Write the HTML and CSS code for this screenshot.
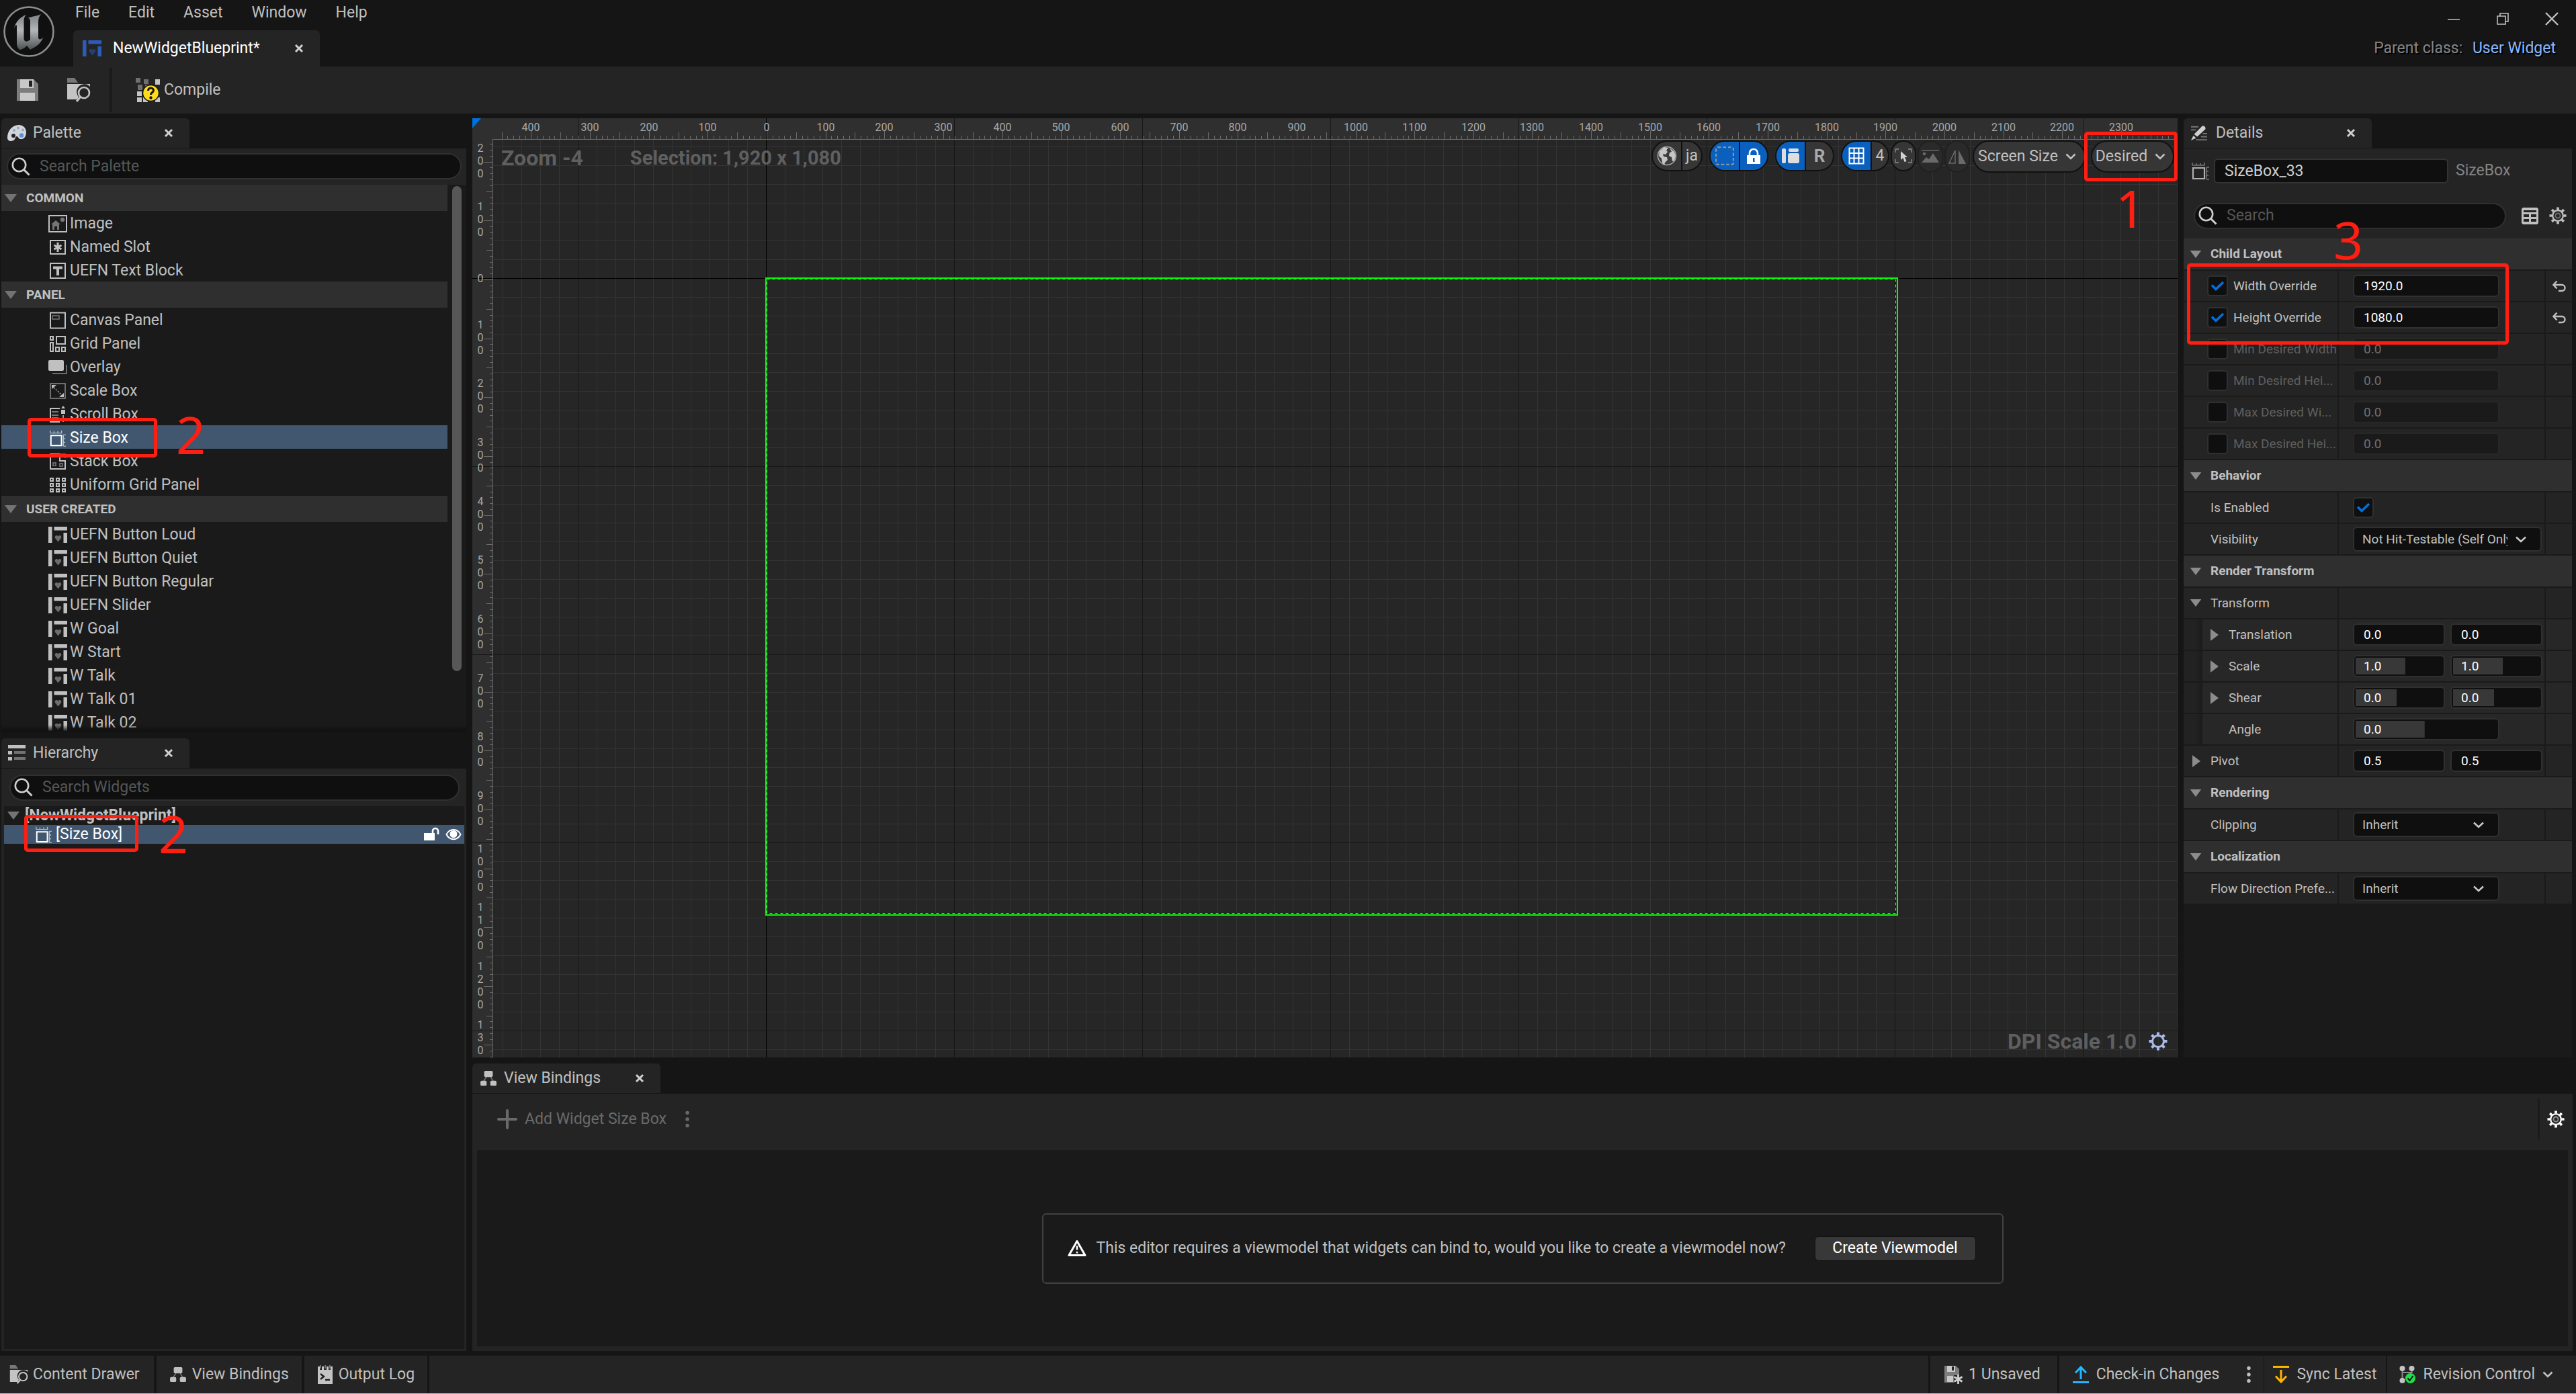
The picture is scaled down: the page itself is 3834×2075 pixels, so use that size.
FILE: index.html
```html
<!DOCTYPE html>
<html lang="en">
<head>
<meta charset="utf-8">
<meta name="viewport" content="width=device-width, initial-scale=1">
<title>NewWidgetBlueprint</title>
<link rel="stylesheet" href="styles.css">
</head>
<body>
<svg class="defs" aria-hidden="true">
  <defs>
    <linearGradient id="metal" x1="0" y1="0" x2="0" y2="1"><stop offset="0" stop-color="#7b7f80"/><stop offset=".45" stop-color="#b4b7b8"/><stop offset="1" stop-color="#4c5152"/></linearGradient>
    <symbol id="i-x" viewBox="0 0 14 14"><path d="M2 2l10 10M12 2L2 12" stroke="currentColor" stroke-width="3" fill="none"/></symbol>
    <symbol id="i-widget" viewBox="0 0 28 24"><path fill="currentColor" d="M0 0h5.500v24H0zM8.500 0H28v5.500H8.500zM22.500 9H28v15h-5.500z"/><path fill="currentColor" opacity=".5" d="M14.500 22.500l-4.500-5.500c-1-2 .5-4 2.200-4 1 0 1.800.6 2.300 1.500.5-.9 1.300-1.500 2.300-1.500 1.700 0 3.200 2 2.200 4z"/></symbol>
    <symbol id="i-save" viewBox="0 0 32 32"><path fill="#7d7d7d" d="M0 0h25l7 7v25H0z"/><path fill="#c8c8c8" d="M5 0h20v13H5zM5 20h22v12H5z"/><path fill="#222" d="M18 2h5v9h-5z"/></symbol>
    <symbol id="i-browse" viewBox="0 0 36 36"><path fill="#777" d="M1 0h11l5 7H1z"/><path fill="#c4c4c4" d="M1 9h34v4a11 11 0 0 0-17 15l-2 4H1z"/><circle cx="26" cy="22" r="8" fill="none" stroke="#c4c4c4" stroke-width="2.600"/><path d="M21 28l-6 7" stroke="#c4c4c4" stroke-width="3"/></symbol>
    <symbol id="i-compile" viewBox="0 0 36 36"><path fill="#6f6f6f" d="M0 0h7v7H0zM12 2h7v7h-7zM3 10h7v8H3zM14 10h7v4h-7z"/><path fill="#c4c4c4" d="M29 2h7v8h-7zM2 20h7v7H2zM2 29h7v7H2zM11 29h7v7h-7zM29 29h7v7h-7z"/><circle cx="22.500" cy="22.500" r="12" fill="#ffdc1c" stroke="#151515" stroke-width="1.500"/><path d="M18.500 19c0-5.500 8-5 8-.5 0 3-4 3-4 6.500" fill="none" stroke="#151515" stroke-width="3"/><circle cx="22.500" cy="29.500" r="2.200" fill="#151515"/></symbol>
    <symbol id="i-palette" viewBox="0 0 28 24"><path fill="#d2d6da" d="M17 0c7 0 11 5 11 11 0 7-4 11-9 10-3-.6-2.500-4-5-4s-1.500 4-5 6c-4 2-9 1-9-4C0 9 7 0 17 0z"/><circle cx="9" cy="16" r="3" fill="#242424"/><circle cx="21" cy="15.500" r="3.200" fill="#5f8fcf"/><circle cx="10" cy="8" r="2" fill="#8aa9cf"/><circle cx="16" cy="4.500" r="2" fill="#8aa9cf"/><circle cx="23" cy="7.500" r="2" fill="#8aa9cf"/></symbol>
    <symbol id="i-search" viewBox="0 0 28 28"><circle cx="11.500" cy="11.500" r="9.700" fill="none" stroke="currentColor" stroke-width="2.600"/><path d="M18.500 18.500l8 8" stroke="currentColor" stroke-width="3"/></symbol>
    <symbol id="i-image" viewBox="0 0 28 26"><path d="M1 1h26v24H1z" fill="none" stroke="currentColor" stroke-width="2"/><g fill="currentColor" opacity=".55"><path d="M4 14l7-6 7 6h-2v8h-3v-5H9v5H6v-8z"/><circle cx="21" cy="7" r="3.200"/></g></symbol>
    <symbol id="i-slot" viewBox="0 0 28 26"><path d="M3 3h22v20H3z" fill="none" stroke="currentColor" stroke-width="2"/><path d="M14 6v14M8.500 10l11 6M19.500 10l-11 6" stroke="currentColor" stroke-width="3"/></symbol>
    <symbol id="i-text" viewBox="0 0 28 26"><path d="M3 2h22v22H3z" fill="none" stroke="currentColor" stroke-width="2"/><path d="M7 8.500h14M14 8v12" stroke="currentColor" stroke-width="4"/></symbol>
    <symbol id="i-canvas" viewBox="0 0 28 26"><path d="M3 1.500h22v23H3z" fill="none" stroke="currentColor" stroke-width="2"/><path d="M6 6h10v5H6z" fill="none" stroke="currentColor" stroke-width="1.500" opacity=".55"/></symbol>
    <symbol id="i-grid" viewBox="0 0 28 26"><path d="M3 2h4v5H3zM3 11h4v13H3zM12 2h13v11H12zM11 18h5v6h-5zM20 18h5v6h-5z" fill="none" stroke="currentColor" stroke-width="2"/></symbol>
    <symbol id="i-overlay" viewBox="0 0 28 26"><rect x="0" y="2" width="23" height="16" rx="2" fill="currentColor"/><path d="M27 9v13H6" fill="none" stroke="currentColor" stroke-width="2" opacity=".5"/></symbol>
    <symbol id="i-scale" viewBox="0 0 28 26"><path d="M3 2h22v22H3z" fill="none" stroke="currentColor" stroke-width="2" opacity=".5"/><path fill="currentColor" d="M5 4h7l-7 6zM23 22h-7l7-6z"/><path d="M8 8l12 11" stroke="currentColor" stroke-width="1.500" stroke-dasharray="2 2"/></symbol>
    <symbol id="i-scroll" viewBox="0 0 28 26"><path d="M17 4H3v20h14" fill="none" stroke="currentColor" stroke-width="2"/><path d="M5 9h10M5 14h10M5 18h10" stroke="currentColor" stroke-width="2" opacity=".55"/><path fill="currentColor" d="M19 6h6v6h-6zM22 0l3 4h-6z"/><path d="M22 14v10" stroke="currentColor" stroke-width="1.500"/></symbol>
    <symbol id="i-size" viewBox="0 0 28 28"><path d="M3 10h17v16H3z" fill="none" stroke="currentColor" stroke-width="2.200"/><path d="M2 6V2M2 6h18V2M8 6V3M14 6V3M23 9v18M23 9h4M23 27h4M23 15h3M23 21h3" fill="none" stroke="currentColor" stroke-width="1.500" opacity=".6"/></symbol>
    <symbol id="i-stack" viewBox="0 0 28 26"><path d="M14 2H3v22h22V12h-8V2z" fill="none" stroke="currentColor" stroke-width="2"/><path d="M7 6h3M7 15h4v4H7zM17 16h4v4h-4zM19 2h6v6" fill="none" stroke="currentColor" stroke-width="1.500" opacity=".6"/></symbol>
    <symbol id="i-uniform" viewBox="0 0 28 26"><path d="M3 3h4v4H3zM12 3h4v4h-4zM21 3h4v4h-4zM3 11h4v4H3zM12 11h4v4h-4zM21 11h4v4h-4zM3 19h4v4H3zM12 19h4v4h-4zM21 19h4v4h-4z" fill="none" stroke="currentColor" stroke-width="2"/></symbol>
    <symbol id="i-down" viewBox="0 0 18 12"><path d="M0 0h18l-9 12z" fill="currentColor"/></symbol>
    <symbol id="i-right" viewBox="0 0 12 18"><path d="M0 0l12 9-12 9z" fill="currentColor"/></symbol>
    <symbol id="i-tree" viewBox="0 0 26 24"><path fill="currentColor" d="M0 0h26v5H0zM0 9h6v5H0zM0 18h6v5H0z"/><path fill="currentColor" opacity=".5" d="M9 9h17v4H9zM9 18h17v4H9z"/></symbol>
    <symbol id="i-unlock" viewBox="0 0 24 20"><path fill="currentColor" d="M0 8h16v11H0z"/><path d="M13 8V5a4 4 0 0 1 8 0v5" fill="none" stroke="currentColor" stroke-width="2.600"/></symbol>
    <symbol id="i-eye" viewBox="0 0 24 18"><path d="M1.500 9C6-.5 18-.5 22.500 9 18 18.500 6 18.500 1.500 9z" fill="none" stroke="currentColor" stroke-width="2"/><circle cx="12" cy="8.500" r="5.500" fill="currentColor"/></symbol>
    <symbol id="i-globe" viewBox="0 0 30 32"><circle cx="15" cy="16" r="13.500" fill="#3c3c3c" stroke="#a9a9a9" stroke-width="1.500"/><path fill="#c6c6c6" d="M4 9l7-6 6 1-3 4 2 2-3 4-4-1 1 4 5 1 1 4-4 4-1 4-3-4-1-6-4-4zM19 4l7 6 2 6-2 7-3 1-1-6-4-2 1-5 3-1z"/></symbol>
    <symbol id="i-marquee" viewBox="0 0 28 28"><rect x="1" y="1" width="26" height="26" rx="3" fill="none" stroke="#8d9499" stroke-width="2.400" stroke-dasharray="4.500 3"/></symbol>
    <symbol id="i-lock" viewBox="0 0 20 23"><path fill="#fff" d="M0 10h20v13H0z"/><path d="M4 11V7a6 6 0 0 1 12 0v4" fill="none" stroke="#fff" stroke-width="2.600"/><path fill="#0a60bf" d="M9 14h2.500v6H9z"/></symbol>
    <symbol id="i-layout" viewBox="0 0 26 22"><g fill="#dedede"><rect width="6" height="22" rx="2"/><rect x="10" width="15" height="5" rx="2"/><rect x="9" y="7" width="17" height="15" rx="3"/></g></symbol>
    <symbol id="i-cells" viewBox="0 0 24 26"><path d="M1.500 1.500h21v23h-21zM8.500 1.500v23M15.500 1.500v23M1.500 9h21M1.500 16.500h21" fill="none" stroke="#fff" stroke-width="2"/></symbol>
    <symbol id="i-pick" viewBox="0 0 26 22"><path d="M1 6V1h5M20 1h5v5M25 16v5h-5M6 21H1v-5" fill="none" stroke="#777" stroke-width="1.800"/><path fill="#d0d0d0" d="M9 4l10 9h-4l2.500 6-3 1-2-6L9 17z"/></symbol>
    <symbol id="i-picture" viewBox="0 0 26 20"><path d="M0 1h26" stroke="#6a6a6a" stroke-width="1.500"/><path fill="#6a6a6a" d="M0 19l7-8 4 3 6-9 9 14z"/><circle cx="4" cy="6" r="2.300" fill="#6a6a6a"/></symbol>
    <symbol id="i-mirror" viewBox="0 0 26 22"><path d="M10 2v19H1z" fill="none" stroke="#6a6a6a" stroke-width="1.500"/><path d="M15 1l11 21H15z" fill="#6a6a6a"/></symbol>
    <symbol id="i-chev" viewBox="0 0 16 10"><path d="M1.500 1.500L8 8l6.500-6.500" fill="none" stroke="currentColor" stroke-width="2.600"/></symbol>
    <symbol id="i-gear" viewBox="0 0 28 28"><circle cx="14" cy="14" r="8.500" fill="none" stroke="currentColor" stroke-width="2.600"/><g stroke="currentColor" stroke-width="4"><path d="M14 .5v4M14 23.500v4M.5 14h4M23.500 14h4M4.500 4.500l2.800 2.800M20.700 20.700l2.800 2.800M23.500 4.500l-2.800 2.800M7.300 20.700l-2.800 2.800"/></g><circle cx="14" cy="14" r="3.800" fill="none" stroke="currentColor" stroke-width="2" opacity=".5"/></symbol>
    <symbol id="i-gear-plain" viewBox="0 0 28 28"><circle cx="14" cy="14" r="8.500" fill="none" stroke="currentColor" stroke-width="3"/><g stroke="currentColor" stroke-width="4"><path d="M14 .5v5M14 22.500v5M.5 14h5M22.500 14h5M4.500 4.500l3 3M20.500 20.500l3 3M23.500 4.500l-3 3M7.500 20.500l-3 3"/></g></symbol>
    <symbol id="i-pencil" viewBox="0 0 27 26"><path d="M1 3h12M1 8h8M20 14h7M17 19h10M9 24h18" stroke="#777" stroke-width="2"/><path fill="#d0d0d0" d="M19 2c2-2 7 2 5 5L11 19l-5-4zM5 17l4 4-8 4z"/></symbol>
    <symbol id="i-table" viewBox="0 0 25 25"><path fill="currentColor" fill-rule="evenodd" d="M2 0h21l2 2v21l-2 2H2l-2-2V2zM3 4v3h19V4zM3 10v4h8v-4zM14 10v4h8v-4zM3 17v4h8v-4zM14 17v4h8v-4z"/></symbol>
    <symbol id="i-reset" viewBox="0 0 20 18"><path d="M1 7h13a4.500 4.500 0 0 1 0 9H9M6.500 1.500L1.500 7l5 5.500" fill="none" stroke="currentColor" stroke-width="2.400"/></symbol>
    <symbol id="i-bind" viewBox="0 0 26 24"><g fill="currentColor"><rect x="6" width="14" height="10" rx="2"/><rect y="16" width="10" height="8" rx="2"/><rect x="16" y="16" width="10" height="8" rx="2"/></g><path d="M10 9l-5 8M16 9l5 8" stroke="currentColor" stroke-width="1.500" opacity=".6"/></symbol>
    <symbol id="i-plus" viewBox="0 0 30 30"><path d="M15 2v26M2 15h26" stroke="currentColor" stroke-width="4" stroke-linecap="round"/></symbol>
    <symbol id="i-dots" viewBox="0 0 6 26"><g fill="currentColor"><circle cx="3" cy="3.500" r="2.700"/><circle cx="3" cy="13" r="2.700"/><circle cx="3" cy="22.500" r="2.700"/></g></symbol>
    <symbol id="i-warn" viewBox="0 0 28 26"><path d="M14 2.500L26 23.500H2z" fill="none" stroke="#fff" stroke-width="3" stroke-linejoin="round"/><path d="M14 9.500v6M14 18v2.500" stroke="#fff" stroke-width="2.600"/></symbol>
    <symbol id="i-log" viewBox="0 0 22 28"><path fill="#c4c4c4" d="M0 2h3v5h3V2h3v5h4V2h3v5h3V2h3v26H0z"/><path d="M4 0v5M11 0v5M18 0v5" stroke="#8a8a8a" stroke-width="1.500"/><path d="M4 13l5 4-5 4M11 22h7" fill="none" stroke="#222" stroke-width="2.400"/></symbol>
    <symbol id="i-unsaved" viewBox="0 0 28 28"><path fill="#7d7d7d" d="M0 1h17l5 5v9h-8v11H0z"/><path fill="#c8c8c8" d="M4 1h12v9H4zM4 16h9v9H4z"/><path fill="#222" d="M11 2h3v6h-3z"/><path d="M20.500 14v14M14.500 17.500l12 7M26.500 17.500l-12 7" stroke="#d0d0d0" stroke-width="2.800"/></symbol>
    <symbol id="i-up" viewBox="0 0 24 26"><path d="M12 20V3M4 10.500l8-8.500 8 8.500M0 24.500h24" fill="none" stroke="#26b4fc" stroke-width="3"/></symbol>
    <symbol id="i-sync" viewBox="0 0 24 26"><path d="M12 6v17M4 15.500l8 8.500 8-8.500M0 1.500h24" fill="none" stroke="#ffb400" stroke-width="3"/></symbol>
    <symbol id="i-rev" viewBox="0 0 24 26"><path d="M4.500 4v18M18.500 4v6H5" fill="none" stroke="#8a8a8a" stroke-width="2"/><g fill="#c4c4c4"><circle cx="4.500" cy="4" r="4"/><circle cx="18.500" cy="4" r="4"/><circle cx="4.500" cy="22" r="4"/></g><circle cx="16.500" cy="18.500" r="7.500" fill="#1fe04b"/><path d="M12.500 18.500l3 3.500 5-7" fill="none" stroke="#111" stroke-width="2"/></symbol>
  </defs>
</svg>

<header class="titlebar">
  <svg class="logo" viewBox="0 0 78 78" aria-hidden="true"><circle cx="39" cy="39" r="36.500" fill="#101010" stroke="#8b8f90" stroke-width="2.600"/><path fill="url(#metal)" d="M17 34c2-9 9-17 18-20-3 3-3.500 6-3.500 10v25c0 4 3 6 6.500 4l3-2V25c0-5-1-6-4-6 8-3 14-3 20-6-3 4-4 7-4 12v22c0 4 2 5 7 1-3 8-9 13-19 18l-5-6c-4 4-8 6-11 6-3-3-4-6-4-10V33c0-5-1-6-4 1z"/></svg>
  <div class="title-main">
    <nav class="menu"><button>File</button><button>Edit</button><button>Asset</button><button>Window</button><button>Help</button></nav>
    <div class="doc-tab"><svg class="ic doc-icon"><use href="#i-widget"/></svg><span>NewWidgetBlueprint*</span><button class="close" aria-label="Close tab"><svg><use href="#i-x"/></svg></button></div>
  </div>
  <div class="title-side">
    <div class="window-buttons">
      <button aria-label="Minimize"><svg viewBox="0 0 20 20"><path d="M1 11h18" stroke="currentColor" stroke-width="1.500"/></svg></button>
      <button aria-label="Restore"><svg viewBox="0 0 20 20"><path d="M2 6h12v12H2zM6 6V2h12v12h-4" fill="none" stroke="currentColor" stroke-width="1.600"/></svg></button>
      <button aria-label="Close"><svg viewBox="0 0 20 20"><path d="M1 1l18 18M19 1L1 19" stroke="currentColor" stroke-width="2.400"/></svg></button>
    </div>
    <p class="parent">Parent class: <a href="#">User Widget</a></p>
  </div>
</header>

<div class="toolbar">
  <button aria-label="Save"><svg class="tool-save"><use href="#i-save"/></svg></button>
  <button aria-label="Browse"><svg class="tool-icon"><use href="#i-browse"/></svg></button>
  <span class="tool-sep"></span>
  <button class="compile"><svg class="tool-icon"><use href="#i-compile"/></svg>Compile</button>
</div>

<main class="workspace">
  <aside class="left">
    <section class="dock">
      <div class="tab"><svg class="ic"><use href="#i-palette"/></svg><h2>Palette</h2><button class="close" aria-label="Close Palette"><svg><use href="#i-x"/></svg></button></div>
      <div class="panel palette">
        <label class="search"><svg><use href="#i-search"/></svg><input type="text" placeholder="Search Palette" aria-label="Search Palette"></label>
        <div class="palette-body">
          <div class="palette-list">
            <h3><svg><use href="#i-down"/></svg>COMMON</h3>
            <ul>
              <li><svg class="ic"><use href="#i-image"/></svg>Image</li>
              <li><svg class="ic"><use href="#i-slot"/></svg>Named Slot</li>
              <li><svg class="ic"><use href="#i-text"/></svg>UEFN Text Block</li>
            </ul>
            <h3><svg><use href="#i-down"/></svg>PANEL</h3>
            <ul>
              <li><svg class="ic"><use href="#i-canvas"/></svg>Canvas Panel</li>
              <li><svg class="ic"><use href="#i-grid"/></svg>Grid Panel</li>
              <li><svg class="ic"><use href="#i-overlay"/></svg>Overlay</li>
              <li><svg class="ic"><use href="#i-scale"/></svg>Scale Box</li>
              <li><svg class="ic"><use href="#i-scroll"/></svg>Scroll Box</li>
              <li class="selected"><svg class="ic"><use href="#i-size"/></svg>Size Box</li>
              <li><svg class="ic"><use href="#i-stack"/></svg>Stack Box</li>
              <li><svg class="ic"><use href="#i-uniform"/></svg>Uniform Grid Panel</li>
            </ul>
            <h3><svg><use href="#i-down"/></svg>USER CREATED</h3>
            <ul>
              <li><svg class="ic"><use href="#i-widget"/></svg>UEFN Button Loud</li>
              <li><svg class="ic"><use href="#i-widget"/></svg>UEFN Button Quiet</li>
              <li><svg class="ic"><use href="#i-widget"/></svg>UEFN Button Regular</li>
              <li><svg class="ic"><use href="#i-widget"/></svg>UEFN Slider</li>
              <li><svg class="ic"><use href="#i-widget"/></svg>W Goal</li>
              <li><svg class="ic"><use href="#i-widget"/></svg>W Start</li>
              <li><svg class="ic"><use href="#i-widget"/></svg>W Talk</li>
              <li><svg class="ic"><use href="#i-widget"/></svg>W Talk 01</li>
              <li><svg class="ic"><use href="#i-widget"/></svg>W Talk 02</li>
            </ul>
          </div>
          <div class="scroll"><span></span></div>
        </div>
      </div>
    </section>
    <section class="dock">
      <div class="tab"><svg class="ic"><use href="#i-tree"/></svg><h2>Hierarchy</h2><button class="close" aria-label="Close Hierarchy"><svg><use href="#i-x"/></svg></button></div>
      <div class="panel hierarchy">
        <label class="search"><svg><use href="#i-search"/></svg><input type="text" placeholder="Search Widgets" aria-label="Search Widgets"></label>
        <ul class="hierarchy-list">
          <li class="root"><svg class="arrow"><use href="#i-down"/></svg>[NewWidgetBlueprint]</li>
          <li class="child selected"><svg class="ic"><use href="#i-size"/></svg><span>[Size Box]</span><button aria-label="Lock"><svg class="row-lock"><use href="#i-unlock"/></svg></button><button aria-label="Visibility"><svg class="row-eye"><use href="#i-eye"/></svg></button></li>
        </ul>
      </div>
    </section>
    <div class="mark mark-palette"></div><span class="num num-palette">2</span>
    <div class="mark mark-hierarchy"></div><span class="num num-hierarchy">2</span>
  </aside>

  <section class="viewport" id="viewport">
    <svg class="stage" id="stage" aria-label="Designer canvas"></svg>
    <div class="view-bar">
      <strong class="zoom">Zoom -4</strong><strong class="selection">Selection: 1,920 x 1,080</strong>
      <div class="tools">
        <div class="pill lang"><button aria-label="Localization"><svg width="30" height="32"><use href="#i-globe"/></svg></button><button>ja</button></div>
        <div class="pill"><button class="on" aria-label="Outlines"><svg width="28" height="28"><use href="#i-marquee"/></svg></button><button class="on" aria-label="Respect locks"><svg width="20" height="23"><use href="#i-lock"/></svg></button></div>
        <div class="pill"><button class="on" aria-label="Layout"><svg width="26" height="22"><use href="#i-layout"/></svg></button><button class="bold">R</button></div>
        <div class="cluster">
          <div class="pill snap"><button class="on" aria-label="Grid snap"><svg width="24" height="26"><use href="#i-cells"/></svg></button><button>4</button></div>
          <button class="round" aria-label="Pick"><svg width="26" height="22"><use href="#i-pick"/></svg></button>
          <button class="round off" aria-label="Background"><svg width="26" height="20"><use href="#i-picture"/></svg></button>
          <button class="round off" aria-label="Flip"><svg width="26" height="22"><use href="#i-mirror"/></svg></button>
        </div>
        <div class="drops">
          <button class="drop screen">Screen Size<svg><use href="#i-chev"/></svg></button>
          <button class="drop desired">Desired<svg><use href="#i-chev"/></svg></button>
        </div>
      </div>
    </div>
    <div class="dpi"><strong>DPI Scale 1.0</strong><button aria-label="DPI settings"><svg><use href="#i-gear-plain"/></svg></button></div>
    <div class="mark mark-desired"></div><span class="num num-desired">1</span>
  </section>

  <section class="dock details">
    <div class="tab"><svg class="ic"><use href="#i-pencil"/></svg><h2>Details</h2><button class="close" aria-label="Close Details"><svg><use href="#i-x"/></svg></button></div>
    <div class="panel">
      <div class="name-row"><svg class="ic"><use href="#i-size"/></svg><input type="text" value="SizeBox_33" aria-label="Widget name"><span>SizeBox</span></div>
      <div class="find-row">
        <label class="search"><svg><use href="#i-search"/></svg><input type="text" placeholder="Search" aria-label="Search details"></label>
        <button aria-label="Property matrix"><svg width="25" height="25"><use href="#i-table"/></svg></button>
        <button aria-label="View options"><svg width="26" height="26"><use href="#i-gear"/></svg></button>
      </div>
      <div class="props">
        <h3><svg><use href="#i-down"/></svg>Child Layout</h3>
        <div class="prop"><div class="key chk"><input type="checkbox" id="c1" checked><label for="c1">Width Override</label></div><div class="val"><input type="text" value="1920.0" aria-label="Width Override"></div><div class="rst"><button aria-label="Reset"><svg><use href="#i-reset"/></svg></button></div></div>
        <div class="prop"><div class="key chk"><input type="checkbox" id="c2" checked><label for="c2">Height Override</label></div><div class="val"><input type="text" value="1080.0" aria-label="Height Override"></div><div class="rst"><button aria-label="Reset"><svg><use href="#i-reset"/></svg></button></div></div>
        <div class="prop dim"><div class="key chk"><input type="checkbox" id="c3"><label for="c3">Min Desired Width</label></div><div class="val"><input type="text" value="0.0" disabled aria-label="Min Desired Width"></div><div class="rst"></div></div>
        <div class="prop dim"><div class="key chk"><input type="checkbox" id="c4"><label for="c4">Min Desired Hei...</label></div><div class="val"><input type="text" value="0.0" disabled aria-label="Min Desired Height"></div><div class="rst"></div></div>
        <div class="prop dim"><div class="key chk"><input type="checkbox" id="c5"><label for="c5">Max Desired Wi...</label></div><div class="val"><input type="text" value="0.0" disabled aria-label="Max Desired Width"></div><div class="rst"></div></div>
        <div class="prop dim"><div class="key chk"><input type="checkbox" id="c6"><label for="c6">Max Desired Hei...</label></div><div class="val"><input type="text" value="0.0" disabled aria-label="Max Desired Height"></div><div class="rst"></div></div>
        <h3><svg><use href="#i-down"/></svg>Behavior</h3>
        <div class="prop"><div class="key"><label for="enabled">Is Enabled</label></div><div class="val"><input type="checkbox" id="enabled" checked></div><div class="rst"></div></div>
        <div class="prop"><div class="key"><label for="vis">Visibility</label></div><div class="val"><select id="vis" class="wide"><option>Not Hit-Testable (Self Only)</option></select></div><div class="rst"></div></div>
        <h3><svg><use href="#i-down"/></svg>Render Transform</h3>
        <div class="prop"><div class="key"><svg class="fold"><use href="#i-down"/></svg>Transform</div><div class="val"></div><div class="rst"></div></div>
        <div class="prop sub"><div class="key"><svg class="fold side"><use href="#i-right"/></svg>Translation</div><div class="val two"><input type="text" value="0.0" aria-label="Translation X"><input type="text" value="0.0" aria-label="Translation Y"></div><div class="rst"></div></div>
        <div class="prop sub"><div class="key"><svg class="fold side"><use href="#i-right"/></svg>Scale</div><div class="val two"><input type="text" class="fill" style="--fill:56%" value="1.0" aria-label="Scale X"><input type="text" class="fill" style="--fill:56%" value="1.0" aria-label="Scale Y"></div><div class="rst"></div></div>
        <div class="prop sub"><div class="key"><svg class="fold side"><use href="#i-right"/></svg>Shear</div><div class="val two"><input type="text" class="fill" style="--fill:46%" value="0.0" aria-label="Shear X"><input type="text" class="fill" style="--fill:46%" value="0.0" aria-label="Shear Y"></div><div class="rst"></div></div>
        <div class="prop sub"><div class="key"><label for="angle">Angle</label></div><div class="val"><input type="text" id="angle" class="fill" style="--fill:48%" value="0.0"></div><div class="rst"></div></div>
        <div class="prop"><div class="key"><svg class="fold side"><use href="#i-right"/></svg>Pivot</div><div class="val two"><input type="text" value="0.5" aria-label="Pivot X"><input type="text" value="0.5" aria-label="Pivot Y"></div><div class="rst"></div></div>
        <h3><svg><use href="#i-down"/></svg>Rendering</h3>
        <div class="prop"><div class="key"><label for="clip">Clipping</label></div><div class="val"><select id="clip"><option>Inherit</option></select></div><div class="rst"></div></div>
        <h3><svg><use href="#i-down"/></svg>Localization</h3>
        <div class="prop"><div class="key"><label for="flow">Flow Direction Prefe...</label></div><div class="val"><select id="flow"><option>Inherit</option></select></div><div class="rst"></div></div>
      </div>
    </div>
    <div class="mark mark-details"></div><span class="num num-details">3</span>
  </section>

  <section class="dock bindings">
    <div class="tab"><svg class="ic"><use href="#i-bind"/></svg><h2>View Bindings</h2><button class="close" aria-label="Close View Bindings"><svg><use href="#i-x"/></svg></button></div>
    <div class="panel">
      <div class="bind-bar">
        <button class="add" disabled><svg width="30" height="30"><use href="#i-plus"/></svg>Add Widget Size Box</button>
        <button class="more" aria-label="More"><svg width="6" height="26"><use href="#i-dots"/></svg></button>
        <button class="opts" aria-label="Settings"><svg width="26" height="26"><use href="#i-gear"/></svg></button>
      </div>
      <div class="bind-body">
        <div class="notice"><svg><use href="#i-warn"/></svg><p>This editor requires a viewmodel that widgets can bind to, would you like to create a viewmodel now?</p><button>Create Viewmodel</button></div>
      </div>
    </div>
  </section>
</main>

<footer class="status">
  <button><svg width="28" height="28"><use href="#i-browse"/></svg>Content Drawer</button>
  <button class="st-view"><svg width="26" height="22"><use href="#i-bind"/></svg>View Bindings</button>
  <button class="st-log"><svg width="22" height="28"><use href="#i-log"/></svg>Output Log</button>
  <div class="status-right">
    <button class="st-unsaved"><svg width="28" height="28"><use href="#i-unsaved"/></svg>1 Unsaved</button>
    <button class="st-check"><svg width="24" height="26"><use href="#i-up"/></svg>Check-in Changes</button>
    <button class="st-more" aria-label="More"><svg width="6" height="26"><use href="#i-dots"/></svg></button>
    <button class="st-sync"><svg width="24" height="26"><use href="#i-sync"/></svg>Sync Latest</button>
    <button class="st-rev"><svg width="24" height="26"><use href="#i-rev"/></svg>Revision Control<svg width="16" height="10"><use href="#i-chev"/></svg></button>
  </div>
</footer>
<script src="stage.js"></script>
</body>
</html>
```
FILE: stage.js
```js
// Draws the designer surface: grid, rulers and the selected widget's outline.
const stage = document.getElementById('stage');
const RULER_W = 30, RULER_H = 31;      // ruler thickness, left and top
const OX = 437, OY = 238;              // where 0,0 of the widget falls
const CELL = 28, MAJOR = 10;           // grid cell, cells per heavy line
const UNIT = 0.8765;                   // screen pixels per widget unit

function draw() {
  const w = stage.clientWidth, h = stage.clientHeight;
  const out = [];
  const line = (x, y, lw, lh, c) => out.push(`<rect x="${x}" y="${y}" width="${lw}" height="${lh}" class="${c}"/>`);
  const label = (x, y, t) => out.push(`<text x="${x}" y="${y}">${t}</text>`);

  line(0, 0, w, RULER_H, 'ruler');
  line(0, 0, RULER_W, h, 'ruler');
  for (const pass of ['minor', 'major']) {
    for (let i = -Math.ceil(OX / CELL); OX + i * CELL < w; i++) {
      const x = OX + i * CELL, heavy = i % MAJOR === 0;
      if (pass === 'minor' && !heavy && x > RULER_W) line(x, RULER_H, 1, h, 'minor');
      if (pass === 'major' && heavy && x > RULER_W) line(x, 0, 1, h, i ? 'major' : 'axis');
    }
    for (let i = -Math.ceil(OY / CELL); OY + i * CELL < h; i++) {
      const y = OY + i * CELL, heavy = i % MAJOR === 0;
      if (pass === 'minor' && !heavy && y > RULER_H) line(RULER_W, y, w, 1, 'minor');
      if (pass === 'major' && heavy && y > RULER_H) line(0, y, w, 1, i ? 'major' : 'axis');
    }
  }
  line(RULER_W, RULER_H, w, 1, 'edge');
  line(RULER_W, RULER_H, 1, h, 'edge');

  for (let u = -450; OX + u * UNIT < w; u += 10) {
    const x = Math.round(OX + 1 + u * UNIT);
    const len = u % 100 === 0 ? 13 : u % 50 === 0 ? 10 : 5;
    if (x > RULER_W) line(x, RULER_H - len, 1, len, 'tick');
    if (u % 100 === 0 && x > RULER_W + 16) label(x, 19, Math.abs(u));
  }
  for (let u = -230; OY + u * UNIT < h; u += 10) {
    const y = Math.round(OY + 2 + u * UNIT);
    const len = u % 100 === 0 ? 13 : u % 50 === 0 ? 9 : 4;
    if (y > RULER_H) line(RULER_W - len, y, len, 1, 'tick');
    if (u % 100 === 0) {
      const digits = [...String(Math.abs(u))];
      digits.forEach((d, i) => label(12, y + 4 + (i - (digits.length - 1) / 2) * 19, d));
    }
  }
  out.push('<path d="M0 0h13L0 15z" class="corner"/>');

  const bw = Math.round(1920 * UNIT), bh = Math.round(1080 * UNIT);
  out.push(`<rect x="${OX + 1}.5" y="${OY + 1}.5" width="${bw - 3}" height="${bh - 3}" class="dark"/>`);
  out.push(`<rect x="${OX + 1}.5" y="${OY + 1}.5" width="${bw - 3}" height="${bh - 3}" class="dash"/>`);
  out.push(`<rect x="${OX}" y="${OY}" width="${bw + 1}" height="${bh + 1}" class="outline"/>`);
  stage.innerHTML = out.join('');
}
draw();
addEventListener('resize', draw);
```
FILE: styles.css
```css
:root {
  --base: #151515;
  --recess: #1a1a1a;
  --panel: #242424;
  --header: #2f2f2f;
  --input: #0f0f0f;
  --line: #383838;
  --text: #c0c0c0;
  --select: #41576f;
  --blue: #0a60bf;
  --red: #ff1e12;
}
* { box-sizing: border-box; }
html, body { margin: 0; }
body {
  display: flex;
  flex-direction: column;
  min-height: 100vh;
  background: var(--base);
  color: var(--text);
  font: 23px/28px Roboto, sans-serif;
  border-bottom: 1px solid #cfc8d2;
}
h2, h3, p, ul { margin: 0; padding: 0; font-weight: 400; font-size: inherit; }
ul { list-style: none; }
button, input, select { font: inherit; color: inherit; margin: 0; }
button {
  display: inline-flex;
  align-items: center;
  justify-content: center;
  padding: 0;
  border: 0;
  background: none;
}
svg { flex: none; }
.defs { position: absolute; width: 0; height: 0; }
.ic { width: 28px; height: 26px; }
.close { width: 24px; height: 24px; margin-left: auto; color: #d0d0d0; }
.close svg { width: 14px; height: 14px; }

/* Title bar */
.titlebar { display: flex; height: 99px; }
.logo { width: 78px; height: 78px; margin: 8px 27px 0 4px; }
.title-main { display: flex; flex-direction: column; justify-content: space-between; }
.menu { display: flex; gap: 43px; padding: 5px 0 0 3px; }
.doc-tab {
  display: flex;
  align-items: center;
  width: 367px;
  height: 54px;
  padding: 0 19px 0 14px;
  border-radius: 6px 6px 0 0;
  background: var(--panel);
  color: #fff;
}
.doc-icon { height: 24px; margin-right: 17px; color: #2c5bb8; }
.title-side { display: flex; flex-direction: column; gap: 20px; margin-left: auto; padding: 18px 26px 0 0; align-items: flex-end; }
.window-buttons { display: flex; gap: 53px; }
.window-buttons svg { width: 20px; height: 20px; }
.parent { padding-right: 4px; color: #858585; text-shadow: 2px 2px 0 #000; }
.parent a { margin-left: 9px; color: #8bb9ff; text-decoration: none; }

/* Main toolbar */
.toolbar { display: flex; align-items: center; height: 70px; padding-left: 25px; background: var(--panel); }
.toolbar > button:nth-child(2) { margin-left: 42px; }
.tool-save { width: 32px; height: 32px; }
.tool-icon { width: 36px; height: 36px; }
.tool-sep { width: 4px; height: 66px; margin: 0 35px 0 28px; background: var(--recess); }
.compile { gap: 6px; }

/* Docked panels */
.workspace {
  flex: 1;
  display: grid;
  grid-template-columns: 692px minmax(0, 1fr) 579px;
  grid-template-rows: minmax(0, 1fr) 428px;
  gap: 9px;
  padding: 7px 5px 7px 2px;
}
.left { position: relative; grid-row: 1 / 3; display: flex; flex-direction: column; gap: 10px; }
.left .dock { flex: 1; }
.dock { display: flex; flex-direction: column; min-height: 0; }
.tab {
  flex: none;
  display: flex;
  align-items: center;
  width: 280px;
  height: 44px;
  margin-bottom: 1px;
  padding: 0 19px 0 9px;
  border-radius: 6px 6px 0 0;
  background: var(--panel);
}
.tab h2 { margin-left: 10px; }
.tab .ic { height: 24px; }
.panel { flex: 1; min-height: 0; display: flex; flex-direction: column; background: var(--panel); }
.search {
  flex: none;
  display: flex;
  align-items: center;
  height: 39px;
  padding: 0 10px 0 5px;
  border: 2px solid #303030;
  border-radius: 20px;
  background: var(--input);
}
.search svg { width: 28px; height: 28px; color: #d0d0d0; }
.search input { flex: 1; min-width: 0; margin-left: 14px; padding: 0; border: 0; background: none; line-height: 28px; }
.search input::placeholder { color: #565656; opacity: 1; }

/* Palette */
.palette .search { margin: 7px 7px 8px 8px; }
.palette-body { position: relative; flex: 1; min-height: 0; display: flex; overflow: hidden; background: var(--recess); }
.palette-body::after {
  content: "";
  position: absolute;
  inset: auto 0 0;
  height: 10px;
  background: linear-gradient(transparent, #101010);
}
.palette-list { flex: 1; }
.palette-list h3 {
  display: flex;
  align-items: center;
  height: 39px;
  padding-left: 5px;
  background: var(--header);
  font-size: 19px;
  font-weight: 700;
}
.palette-list h3 svg, .arrow { width: 18px; height: 12px; margin-right: 14px; color: #737373; }
.palette-list li { display: flex; align-items: center; gap: 4px; height: 35px; padding: 2px 0 0 70px; }
.palette-list .selected, .hierarchy-list .selected { background: var(--select); color: #fff; }
.scroll { width: 28px; padding: 2px 7px; }
.scroll span { display: block; width: 14px; height: 722px; border-radius: 7px; background: #575757; }

/* Hierarchy */
.hierarchy .search { margin: 9px 10px 8px 12px; }
.hierarchy-list { flex: 1; margin: 0 3px 3px 4px; background: var(--recess); }
.hierarchy-list li { display: flex; align-items: center; height: 28px; }
.hierarchy-list .root { padding-left: 5px; font-weight: 700; }
.hierarchy-list .arrow { margin-right: 8px; }
.hierarchy-list .child { padding: 0 4px 0 45px; }
.hierarchy-list .child span { margin: 0 auto 0 4px; }
.hierarchy-list button { margin-left: 8px; }
.row-lock { width: 24px; height: 22px; }
.row-eye { width: 24px; height: 20px; }

/* Designer */
.viewport { position: relative; min-width: 0; overflow: hidden; background: #262626; }
.stage { position: absolute; inset: 0; width: 100%; height: 100%; font-size: 16px; }
.stage text { fill: #a8a8a8; text-anchor: middle; }
.stage .ruler { fill: #2f2f2f; }
.stage .minor { fill: #343434; }
.stage .major { fill: #171717; }
.stage .axis { fill: #000; }
.stage .edge { fill: #6b6b6b; }
.stage .tick { fill: #6b6b6b; }
.stage .corner { fill: #0070e0; }
.stage .dark { fill: none; stroke: #161616; }
.stage .dash { fill: none; stroke: #b4b4b4; stroke-dasharray: 4 4; }
.stage .outline { fill: none; stroke: #00ff00; stroke-width: 2; }
.view-bar { position: absolute; inset: 33px 5px auto 43px; display: flex; align-items: flex-start; }
.view-bar strong, .dpi strong { color: #5f5f5f; font-size: 32px; line-height: 52px; }
.view-bar .selection { margin-left: 70px; font-size: 29px; }
.tools { display: flex; gap: 10px; margin-left: auto; }
.pill { display: flex; height: 46px; border: 2px solid #111; border-radius: 23px; background: #363636; overflow: hidden; }
.pill button { width: 42px; }
.pill button + button { border-left: 2px solid #111; }
.pill .on { background: var(--blue); }
.pill .bold { color: #a8a8a8; font-size: 26px; font-weight: 700; }
.lang button + button { width: 30px; }
.snap button + button { width: 26px; }
.cluster { display: flex; gap: 2px; }
.round { width: 38px; height: 46px; border: 2px solid #111; border-radius: 20px; background: #363636; }
.round.off { height: 48px; border-color: #202020; background: #2a2a2a; }
.drops { display: flex; gap: 8px; margin-left: -6px; }
.drop { gap: 11px; height: 48px; padding-right: 6px; border: 2px solid #111; border-radius: 24px; background: #363636; }
.drop svg { width: 16px; height: 10px; }
.screen { width: 168px; }
.desired { width: 124px; }
.dpi { position: absolute; right: 15px; bottom: 6px; display: flex; align-items: center; gap: 18px; }
.dpi strong { line-height: 36px; }
.dpi button { color: #a9bbe6; }
.dpi svg { width: 28px; height: 28px; }

/* Details */
.details { position: relative; padding-right: 1px; }
.details .tab .ic { width: 27px; }
.details .tab h2 { margin-left: 12px; }
.details .panel { background: var(--recess); }
.name-row { display: flex; align-items: center; height: 66px; padding: 0 45px 0 11px; background: var(--panel); color: #858585; }
.name-row .ic { height: 28px; color: #b0b0b0; }
.name-row input {
  flex: 1;
  min-width: 0;
  height: 37px;
  margin: 0 11px 0 6px;
  padding: 0 14px;
  border: 2px solid #333;
  border-radius: 6px;
  background: var(--input);
  color: #d0d0d0;
}
.name-row span { width: 128px; }
.find-row { display: flex; align-items: center; height: 68px; padding: 0 8px 0 15px; background: var(--panel); }
.find-row .search { flex: 1; margin-right: 23px; }
.find-row button { margin-right: 16px; }
.find-row button:last-child { margin-right: 0; }
.props { font-size: 19px; line-height: 24px; }
.props h3 {
  display: flex;
  align-items: center;
  height: 48px;
  padding-left: 9px;
  border-bottom: 2px solid var(--recess);
  background: var(--header);
  font-weight: 700;
}
.props h3 svg { width: 18px; height: 11px; margin-right: 13px; color: #8c8c8c; }
.prop { display: grid; grid-template-columns: 229px minmax(0, 1fr) 39px; gap: 2px; height: 47px; border-bottom: 2px solid var(--recess); }
.prop > div { display: flex; align-items: center; background: var(--panel); }
.prop .key { padding-left: 40px; overflow: hidden; white-space: nowrap; }
.prop .chk { padding-left: 35px; gap: 8px; }
.prop .fold { width: 18px; height: 11px; margin: 0 13px 0 -31px; color: #8c8c8c; }
.prop .side { width: 12px; height: 18px; margin: 0 15px 0 -27px; }
.prop.sub > div { background: #272727; }
.prop.sub .key { padding-left: 67px; background: linear-gradient(90deg, #222 0 18px, #1b1b1b 28px, #272727 28px); }
.prop .val { gap: 8px; padding: 0 4px 0 21px; }
.prop .rst { justify-content: center; }
.rst svg { width: 20px; height: 18px; }
.val input[type="text"] {
  width: 218px;
  height: 33px;
  padding: 0 14px;
  border: 2px solid #303030;
  border-radius: 6px;
  background: var(--input);
  color: #fff;
}
.val.two input[type="text"] { width: 137px; }
.val input.fill {
  background-image: linear-gradient(var(--line), var(--line));
  background-position: 2px 2px;
  background-repeat: no-repeat;
  background-size: var(--fill) 25px;
}
.dim { color: #5f5f5f; }
.dim .val input[type="text"] { border-color: #272727; background: #1a1a1a; color: #6f6f6f; }
.props input[type="checkbox"] {
  appearance: none;
  flex: none;
  width: 31px;
  height: 31px;
  border: 2px solid #303030;
  border-radius: 5px;
  background: var(--input) center / 21px 15px no-repeat;
}
.props input[type="checkbox"]:checked {
  background-image: url("data:image/svg+xml,%3Csvg xmlns='http://www.w3.org/2000/svg' viewBox='0 0 21 15'%3E%3Cpath d='M2 6.500l6 6L19 2' fill='none' stroke='%230070e0' stroke-width='3.500'/%3E%3C/svg%3E");
}
.props select {
  appearance: none;
  width: 218px;
  height: 37px;
  padding: 0 49px 0 12px;
  border: 2px solid #303030;
  border-radius: 6px;
  background: var(--input) url("data:image/svg+xml,%3Csvg xmlns='http://www.w3.org/2000/svg' viewBox='0 0 16 10'%3E%3Cpath d='M1 1.500L8 8l7-6.500' fill='none' stroke='%23c8c8c8' stroke-width='2.600'/%3E%3C/svg%3E") right 21px center / 16px 10px no-repeat;
}
.props .wide { width: 281px; }

/* View Bindings */
.bindings { grid-column: 2 / 4; }
.bindings .tab { padding-left: 11px; }
.bindings .tab .ic { width: 26px; height: 22px; }
.bind-bar { display: flex; align-items: center; height: 76px; padding-left: 37px; color: #6a6a6a; }
.bind-bar .add { gap: 11px; color: inherit; }
.bind-bar .more { margin-left: 28px; }
.opts { width: 50px; height: 60px; margin: 0 2px 0 auto; border-left: 3px solid var(--recess); color: #fff; }
.bind-body { flex: 1; display: grid; place-items: center; margin: 8px 7px 7px; background: var(--recess); }
.notice { display: flex; align-items: center; min-width: 1431px; height: 105px; padding: 0 39px 0 36px; border: 2px solid #414141; border-radius: 6px; }
.notice svg { width: 28px; height: 26px; margin-right: 15px; }
.notice button { width: 240px; height: 37px; margin-left: auto; border: 1px solid #111; border-radius: 6px; background: var(--line); color: #fff; }

/* Status bar */
.status { display: flex; height: 56px; background: var(--panel); }
.status button { gap: 7px; padding: 0 21px 0 14px; border-right: 4px solid var(--base); }
.status .st-view { gap: 8px; padding: 0 19px 0 19px; }
.status .st-log { gap: 9px; padding: 0 19px 0 20px; border-right-width: 3px; }
.status-right { display: flex; margin-left: auto; padding-right: 5px; }
.status .st-unsaved { gap: 8px; padding: 0 25px 0 21px; border-left: 3px solid var(--base); border-right-width: 3px; }
.status .st-check { gap: 11px; padding: 0 41px 0 20px; border: 0; }
.status .st-more { padding: 0 19px 0 0; border-right: 1px solid var(--base); }
.status .st-sync { gap: 11px; padding: 0 14px 0 13px; border-right: 2px solid var(--base); }
.status .st-rev { gap: 11px; padding: 0 29px 0 18px; border: 0; }

/* Red step annotations laid over the panels */
.mark { position: absolute; border: 5px solid var(--red); border-radius: 5px; pointer-events: none; }
.num { position: absolute; color: var(--red); font: 77px/56px "Noto Sans", sans-serif; pointer-events: none; }
.mark-palette { left: 39px; top: 446px; width: 193px; height: 59px; }
.num-palette { left: 260px; top: 443px; }
.mark-hierarchy { left: 34px; top: 1037px; width: 170px; height: 55px; }
.num-hierarchy { left: 234px; top: 1037px; }
.mark-desired { right: 0; top: 20px; width: 139px; height: 74px; }
.num-desired { right: 48px; top: 106px; }
.mark-details { left: 5px; top: 216px; width: 479px; height: 121px; }
.num-details { left: 223px; top: 153px; }
```
